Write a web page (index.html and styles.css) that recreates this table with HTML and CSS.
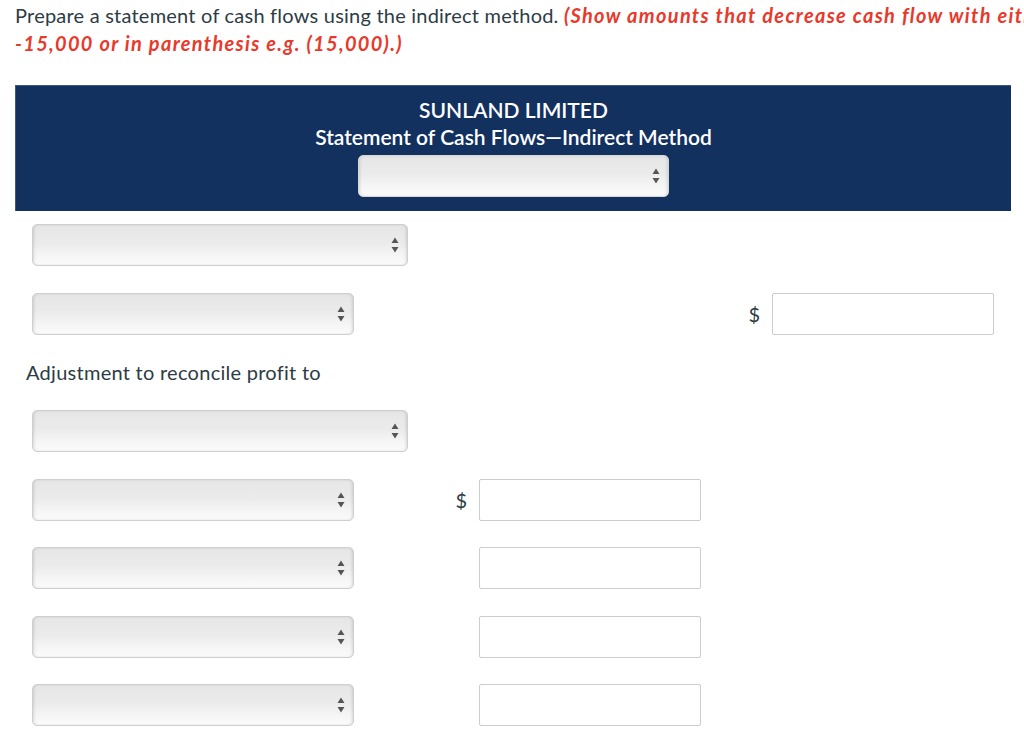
FILE: index.html
```html
<!DOCTYPE html>
<html lang="en">
<head>
<meta charset="utf-8">
<title>Statement of Cash Flows</title>
<link rel="stylesheet" href="styles.css">
</head>
<body>
<p class="intro">Prepare a statement of cash flows using the indirect method. <em class="hint">(Show amounts that decrease cash flow with either<br>-15,000 or in parenthesis e.g. (15,000).)</em></p>

<div class="header">
  <div class="title">SUNLAND LIMITED</div>
  <div class="subtitle">Statement of Cash Flows—Indirect Method</div>
  <div class="select select-head"><svg class="arrows" width="8" height="16" viewBox="0 0 8 16"><path d="M4 0.5 L7.5 6 L0.5 6 Z M4 15.5 L7.5 10 L0.5 10 Z"/></svg></div>
</div>

<div class="rows">
  <div class="row">
    <div class="select select-long"><svg class="arrows" width="8" height="16" viewBox="0 0 8 16"><path d="M4 0.5 L7.5 6 L0.5 6 Z M4 15.5 L7.5 10 L0.5 10 Z"/></svg></div>
  </div>
  <div class="row">
    <div class="select select-short"><svg class="arrows" width="8" height="16" viewBox="0 0 8 16"><path d="M4 0.5 L7.5 6 L0.5 6 Z M4 15.5 L7.5 10 L0.5 10 Z"/></svg></div>
    <span class="cur cur-wide">$</span>
    <div class="field"></div>
  </div>
  <div class="row row-label">
    <span class="label">Adjustment to reconcile profit to</span>
  </div>
  <div class="row">
    <div class="select select-long"><svg class="arrows" width="8" height="16" viewBox="0 0 8 16"><path d="M4 0.5 L7.5 6 L0.5 6 Z M4 15.5 L7.5 10 L0.5 10 Z"/></svg></div>
  </div>
  <div class="row">
    <div class="select select-short"><svg class="arrows" width="8" height="16" viewBox="0 0 8 16"><path d="M4 0.5 L7.5 6 L0.5 6 Z M4 15.5 L7.5 10 L0.5 10 Z"/></svg></div>
    <span class="cur">$</span>
    <div class="field"></div>
  </div>
  <div class="row">
    <div class="select select-short"><svg class="arrows" width="8" height="16" viewBox="0 0 8 16"><path d="M4 0.5 L7.5 6 L0.5 6 Z M4 15.5 L7.5 10 L0.5 10 Z"/></svg></div>
    <span class="cur"></span>
    <div class="field"></div>
  </div>
  <div class="row">
    <div class="select select-short"><svg class="arrows" width="8" height="16" viewBox="0 0 8 16"><path d="M4 0.5 L7.5 6 L0.5 6 Z M4 15.5 L7.5 10 L0.5 10 Z"/></svg></div>
    <span class="cur"></span>
    <div class="field"></div>
  </div>
  <div class="row">
    <div class="select select-short"><svg class="arrows" width="8" height="16" viewBox="0 0 8 16"><path d="M4 0.5 L7.5 6 L0.5 6 Z M4 15.5 L7.5 10 L0.5 10 Z"/></svg></div>
    <span class="cur"></span>
    <div class="field"></div>
  </div>
</div>
</body>
</html>
```

FILE: styles.css
```css
html {
  min-height: 100%;
  background: linear-gradient(to bottom, #ffffff calc(100% - 20px), #f4f4f4 100%);
}
body {
  margin: 0;
  padding: 0 0 0 15px;
  font-family: Lato, "Open Sans", sans-serif;
  color: #2d3b45;
  overflow: hidden;
  width: 1009px;
}
.intro {
  margin: 0;
  padding-top: 1px;
  font-size: 20px;
  line-height: 28px;
  white-space: nowrap;
  letter-spacing: 0.22px;
}
.hint {
  color: #e8392b;
  font-weight: 700;
  font-style: italic;
  letter-spacing: 1.3px;
}
.header {
  margin-top: 28px;
  width: 996px;
  height: 126px;
  box-sizing: border-box;
  background: #13315f;
  border-top: 1px solid #3d5883;
  border-left: 1px solid #3d5883;
  display: flex;
  flex-direction: column;
  align-items: center;
  color: #ffffff;
  padding-top: 10px;
}
.title {
  font-size: 21px;
  font-weight: 600;
  line-height: 27px;
}
.subtitle {
  font-size: 21px;
  font-weight: 600;
  line-height: 28px;
}
.select {
  box-sizing: border-box;
  height: 42px;
  border: 1px solid #cfcfcf;
  border-radius: 5px;
  background: linear-gradient(to bottom, #e6e6e6 0%, #ebebeb 45%, #f5f5f5 75%, #fbfbfb 100%);
  box-shadow: inset 2px 0 3px -1px rgba(0,0,0,0.12), inset -2px 0 3px -1px rgba(0,0,0,0.12);
  display: flex;
  align-items: center;
  justify-content: flex-end;
  padding-right: 8px;
  flex: none;
}
.arrows {
  fill: #555555;
  display: block;
}
.select-head {
  margin-top: 4px;
  width: 311px;
  border-color: #d8d8d8;
}
.rows {
  padding-left: 17px;
  padding-top: 13px;
}
.row {
  display: flex;
  align-items: center;
  height: 42px;
  margin-bottom: 26.5px;
}
.row-label {
  height: 26px;
  margin-top: -2.5px;
  margin-bottom: 25.5px;
}
.label {
  font-size: 20px;
  margin-left: -6px;
  color: #2d3b45;
  letter-spacing: 0.27px;
}
.select-long {
  width: 376px;
}
.select-short {
  width: 322px;
}
.cur {
  flex: none;
  width: 125px;
  text-align: right;
  padding-right: 12px;
  box-sizing: border-box;
  font-size: 20px;
  color: #2d3b45;
}
.cur-wide {
  width: 418px;
}
.field {
  box-sizing: border-box;
  width: 222px;
  height: 42px;
  border: 1px solid #cccccc;
  border-radius: 2px;
  background: #ffffff;
  flex: none;
}
```
